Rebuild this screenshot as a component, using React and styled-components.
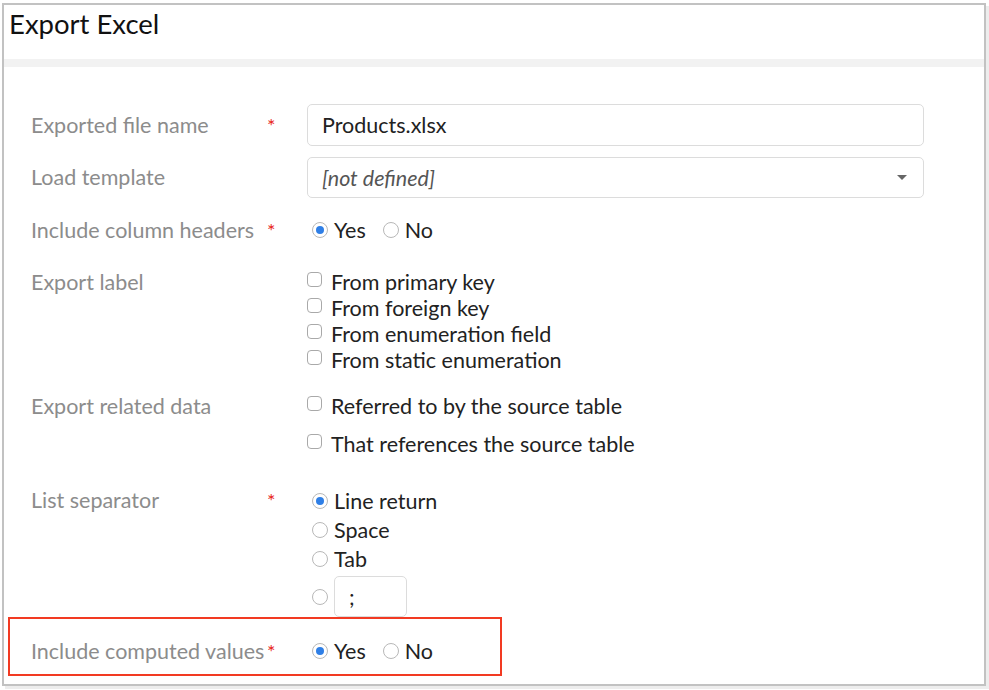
import styled, { createGlobalStyle } from 'styled-components';

const GlobalStyle = createGlobalStyle`
  html, body {
    margin: 0;
    padding: 0;
    background: #fff;
  }
  body {
    font-family: Lato, "Open Sans", sans-serif;
  }
`;

const Page = styled.div`
  padding: 3px 0 0 2px;
  width: 989px;
  height: 690px;
  box-sizing: border-box;
`;

const Frame = styled.div`
  width: 984px;
  height: 683px;
  box-sizing: border-box;
  border: 2px solid #c2c2c2;
  background: #fff;
  box-shadow: 3px 3px 0 #ededed;
  display: flex;
  flex-direction: column;
`;

const Header = styled.div`
  box-sizing: content-box;
  height: 52px;
  padding: 2px 0 0 5px;
  font-size: 27.5px;
  line-height: 34px;
  color: #111;
  border-bottom: 8px solid #f2f2f2;
`;

const Form = styled.div`
  padding: 37px 0 0 27px;
  display: flex;
  flex-direction: column;
`;

const Row = styled.div`
  display: flex;
  align-items: flex-start;
  margin-top: ${p => p.$mt || 0}px;
`;

const Highlight = styled(Row)`
  width: 494px;
  box-sizing: border-box;
  margin-left: -23px;
  padding: 19px 0 10px 21px;
  border: 2px solid #f23a22;
`;

const Label = styled.div`
  width: 236px;
  flex: none;
  font-size: 21.5px;
  line-height: ${p => p.$lh || 26}px;
  color: #8c8c8c;
  white-space: nowrap;
`;

const Star = styled.div`
  width: 40px;
  flex: none;
  font-size: 20px;
  line-height: ${p => p.$lh || 26}px;
  color: #e8261c;
`;

const Control = styled.div`
  display: flex;
  flex-direction: column;
  gap: ${p => p.$gap || 0}px;
`;

const TextBox = styled.div`
  width: 617px;
  height: ${p => p.$h || 42}px;
  box-sizing: border-box;
  border: 1px solid #dcdcdc;
  border-radius: 5px;
  padding: 0 14px;
  display: flex;
  align-items: center;
  justify-content: space-between;
  font-size: 21.5px;
  color: ${p => (p.$placeholder ? '#555' : '#222')};
  font-style: ${p => (p.$placeholder ? 'italic' : 'normal')};
`;

const Caret = styled.span`
  width: 0;
  height: 0;
  margin-right: 2px;
  border-left: 5px solid transparent;
  border-right: 5px solid transparent;
  border-top: 5px solid #666;
`;

const Inline = styled.div`
  display: flex;
  align-items: center;
  height: ${p => p.$h || 26}px;
  margin-top: ${p => p.$mt || 0}px;
`;

const Option = styled.label`
  display: flex;
  align-items: center;
  font-size: 21.5px;
  color: #222;
  margin-right: 12px;
  height: ${p => p.$h || 26}px;
`;

const Radio = styled.span`
  width: 16px;
  height: 16px;
  box-sizing: border-box;
  margin: 0 6px 0 5px;
  border-radius: 50%;
  border: 1px solid #b8b8b8;
  background: #fff;
  display: flex;
  align-items: center;
  justify-content: center;
  flex: none;
  &::after {
    content: '';
    width: 8px;
    height: 8px;
    border-radius: 50%;
    background: ${p => (p.$on ? '#2f7fe6' : 'transparent')};
  }
`;

const Check = styled.span`
  width: 15px;
  height: 15px;
  box-sizing: border-box;
  margin: 0 9px 0 0;
  border-radius: 4px;
  border: 1px solid #a9a9a9;
  background: #fff;
  flex: none;
  transform: translateY(-3px);
`;

const SepBox = styled.div`
  width: 73px;
  height: 41px;
  box-sizing: border-box;
  border: 1px solid #dcdcdc;
  border-radius: 5px;
  padding-left: 14px;
  display: flex;
  align-items: center;
  font-size: 21.5px;
  color: #222;
`;

function RadioOpt({ on, children, h }) {
  return (
    <Option $h={h}>
      <Radio $on={on} />
      {children}
    </Option>
  );
}

function CheckOpt({ children }) {
  return (
    <Option>
      <Check />
      {children}
    </Option>
  );
}

export default function App() {
  return (
    <Page>
      <GlobalStyle />
      <Frame>
        <Header>Export Excel</Header>
        <Form>
          <Row>
            <Label $lh={42}>Exported file name</Label>
            <Star $lh={42}>*</Star>
            <TextBox>Products.xlsx</TextBox>
          </Row>
          <Row $mt={11}>
            <Label $lh={41}>Load template</Label>
            <Star $lh={41} />
            <TextBox $h={41} $placeholder>
              [not defined]
              <Caret />
            </TextBox>
          </Row>
          <Row $mt={19}>
            <Label>Include column headers</Label>
            <Star>*</Star>
            <Inline>
              <RadioOpt on>Yes</RadioOpt>
              <RadioOpt>No</RadioOpt>
            </Inline>
          </Row>
          <Row $mt={26}>
            <Label>Export label</Label>
            <Star />
            <Control>
              <CheckOpt>From primary key</CheckOpt>
              <CheckOpt>From foreign key</CheckOpt>
              <CheckOpt>From enumeration field</CheckOpt>
              <CheckOpt>From static enumeration</CheckOpt>
            </Control>
          </Row>
          <Row $mt={20}>
            <Label>Export related data</Label>
            <Star />
            <Control $gap={12}>
              <CheckOpt>Referred to by the source table</CheckOpt>
              <CheckOpt>That references the source table</CheckOpt>
            </Control>
          </Row>
          <Row $mt={29}>
            <Label $lh={29}>List separator</Label>
            <Star $lh={29}>*</Star>
            <Control>
              <RadioOpt on h={29}>Line return</RadioOpt>
              <RadioOpt h={29}>Space</RadioOpt>
              <RadioOpt h={29}>Tab</RadioOpt>
              <Inline $h={41} $mt={3}>
                <Radio />
                <SepBox>;</SepBox>
              </Inline>
            </Control>
          </Row>
          <Highlight>
            <Label>Include computed values</Label>
            <Star>*</Star>
            <Inline>
              <RadioOpt on>Yes</RadioOpt>
              <RadioOpt>No</RadioOpt>
            </Inline>
          </Highlight>
        </Form>
      </Frame>
    </Page>
  );
}
